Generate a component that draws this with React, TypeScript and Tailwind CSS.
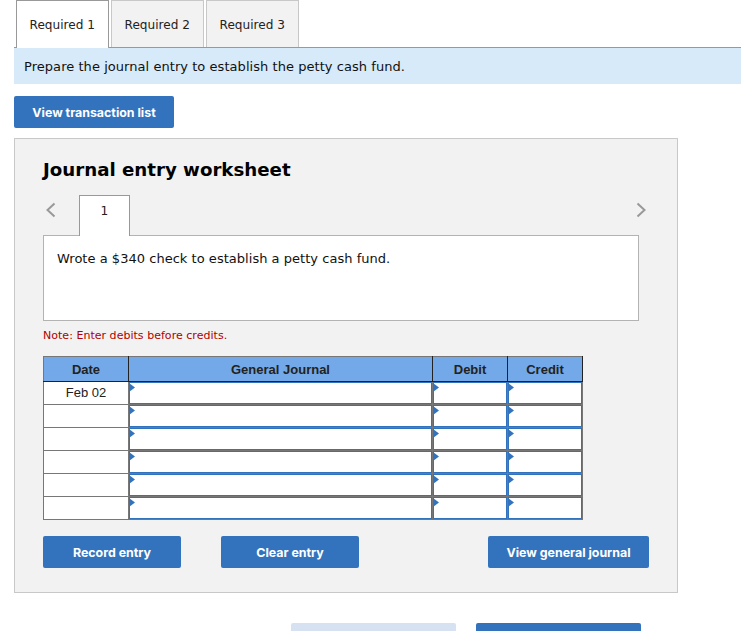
const verdana = "font-['DejaVu_Sans',Verdana,sans-serif]"

const tabs = ['Required 1', 'Required 2', 'Required 3']
const rows = ['Feb 02', '', '', '', '', '']

function EntryCell() {
  return (
    <td className="h-[23px] p-0 border border-[#777777]">
      <div className="relative h-[22px] bg-white border border-[#3373bd]">
        <svg className="absolute left-[-1px] top-[0px]" width="6" height="9" viewBox="0 0 6 9">
          <path d="M0 0 L6 4.5 L0 9 Z" fill="#3373bd" />
        </svg>
      </div>
    </td>
  )
}

function BlueButton({ label, width }: { label: string; width: string }) {
  return (
    <button className={`${width} h-8 pt-[2px] bg-[#3373bd] rounded-[2px] text-white text-[12.4px] font-bold font-['Inter',sans-serif]`}>
      {label}
    </button>
  )
}

export default function App() {
  return (
    <div className="w-[741px] h-[631px] overflow-hidden bg-white pl-[14px]">
      <div className="flex h-[48px] border-b border-[#999999] pl-[2px] gap-[2.5px]">
        {tabs.map((tab, i) => (
          <div
            key={tab}
            className={`${verdana} w-[92.5px] flex items-center justify-center text-[12.1px] text-[#222222] border border-b-0 ${
              i === 0 ? 'bg-white border-[#999999] h-[48px] pt-[2px]' : 'bg-[#f2f2f2] border-[#c8c8c8] h-[47px] pt-[3px]'
            }`}
          >
            {tab}
          </div>
        ))}
      </div>

      <div className={`${verdana} h-[36px] bg-[#d6eafa] pl-[10px] pt-[1px] flex items-center text-[13px] tracking-[0.05px] text-[#111111]`}>
        Prepare the journal entry to establish the petty cash fund.
      </div>

      <button className="mt-[12px] w-40 h-8 pt-[2px] bg-[#3373bd] rounded-[2px] text-white text-[12.4px] font-bold font-['Inter',sans-serif] block">
        View transaction list
      </button>

      <div className="mt-[10px] w-[664px] h-[455px] bg-[#f2f2f2] border border-[#c8c8c8] pl-[28px] pt-[19px]">
        <h2 className={`${verdana} text-[18.2px] leading-6 font-bold text-black`}>Journal entry worksheet</h2>

        <div className="mt-[13px] flex items-center h-[41px] w-[596px] relative">
          <svg className="ml-[2px] mb-[12px]" width="11" height="16" viewBox="0 0 11 16" fill="none">
            <path d="M9.5 1.5 L2.5 8 L9.5 14.5" stroke="#999999" strokeWidth="2" />
          </svg>
          <div className={`${verdana} absolute left-[36px] top-0 z-10 w-[51px] h-[41px] pb-[10px] bg-white border border-[#999999] border-b-0 flex items-center justify-center text-[12.2px] text-[#222222]`}>
            1
          </div>
          <svg className="absolute right-[-8px] top-[7px]" width="11" height="16" viewBox="0 0 11 16" fill="none">
            <path d="M1.5 1.5 L8.5 8 L1.5 14.5" stroke="#999999" strokeWidth="2" />
          </svg>
        </div>

        <div className={`${verdana} w-[596px] h-[86px] -mt-px bg-white border border-[#b3b3b3] pl-[13px] pt-[14px] text-[13px] tracking-[0.03px] leading-[18px] text-[#111111]`}>
          Wrote a $340 check to establish a petty cash fund.
        </div>

        <p className={`${verdana} mt-[8px] text-[11px] tracking-[0.03px] leading-[14px] text-[#b00000]`}>Note: Enter debits before credits.</p>

        <table className="mt-[13px] w-[540px] table-fixed border-collapse border border-[#777777] font-['Liberation_Sans',Arial,sans-serif] text-[13px]">
          <thead>
            <tr className="h-[25px] bg-[#73a9e8] text-[#222222]">
              <th className="w-[85px] p-0 pt-[2px] font-bold border border-[#777777] border-r-[#222222] border-b-[#222222]">Date</th>
              <th className="w-[304px] p-0 pt-[2px] font-bold border border-[#777777] border-r-[#222222] border-b-[#222222]">General Journal</th>
              <th className="w-[75px] p-0 pt-[2px] font-bold border border-[#777777] border-r-[#222222] border-b-[#222222]">Debit</th>
              <th className="w-[75px] p-0 pt-[2px] font-bold border border-[#777777] border-r-[#222222] border-b-[#222222]">Credit</th>
            </tr>
          </thead>
          <tbody>
            {rows.map((date, i) => (
              <tr key={i} className="h-[23px]">
                <td className="p-0 bg-white text-center text-[#222222] border border-[#777777]">{date}</td>
                <EntryCell />
                <EntryCell />
                <EntryCell />
              </tr>
            ))}
          </tbody>
        </table>

        <div className="mt-4 w-[606px] flex justify-between">
          <div className="flex gap-10">
            <BlueButton label="Record entry" width="w-[138px]" />
            <BlueButton label="Clear entry" width="w-[138px]" />
          </div>
          <BlueButton label="View general journal" width="w-[161px]" />
        </div>
      </div>

      <div className="mt-[30px] ml-[277px] flex gap-5">
        <div className="w-[165px] h-8 bg-[#d6e2f2] rounded-[2px]" />
        <div className="w-[165px] h-8 bg-[#3373bd] rounded-[2px]" />
      </div>
    </div>
  )
}
